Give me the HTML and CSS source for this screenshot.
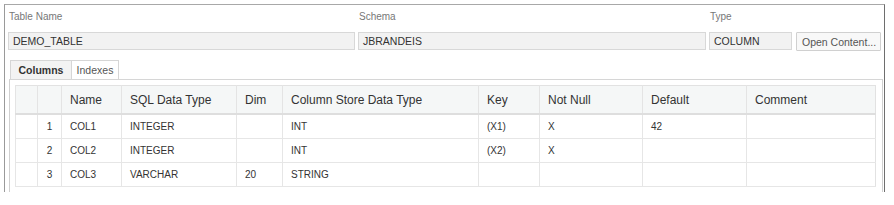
FILE: index.html
```html
<!DOCTYPE html>
<html>
<head>
<meta charset="utf-8">
<link rel="stylesheet" href="styles.css">
</head>
<body>
<div class="frame">
  <div class="fields">
    <div class="field">
      <div class="label">Table Name</div>
      <div class="input">DEMO_TABLE</div>
    </div>
    <div class="field">
      <div class="label">Schema</div>
      <div class="input">JBRANDEIS</div>
    </div>
    <div class="field">
      <div class="label">Type</div>
      <div class="input">COLUMN</div>
    </div>
    <div class="field">
      <div class="label">&nbsp;</div>
      <button class="btn">Open Content...</button>
    </div>
  </div>
  <div class="tabs">
    <div class="tab active">Columns</div>
    <div class="tab">Indexes</div>
  </div>
  <div class="panel">
    <table class="grid">
      <colgroup>
        <col style="width:22px"><col style="width:24px"><col style="width:60px"><col style="width:115px"><col style="width:46px"><col style="width:196px"><col style="width:61px"><col style="width:103px"><col style="width:104px"><col style="width:129px">
      </colgroup>
      <thead>
        <tr><th></th><th></th><th>Name</th><th>SQL Data Type</th><th>Dim</th><th>Column Store Data Type</th><th>Key</th><th>Not Null</th><th>Default</th><th>Comment</th></tr>
      </thead>
      <tbody>
        <tr><td></td><td class="num">1</td><td>COL1</td><td>INTEGER</td><td></td><td>INT</td><td>(X1)</td><td>X</td><td>42</td><td></td></tr>
        <tr><td></td><td class="num">2</td><td>COL2</td><td>INTEGER</td><td></td><td>INT</td><td>(X2)</td><td>X</td><td></td><td></td></tr>
        <tr><td></td><td class="num">3</td><td>COL3</td><td>VARCHAR</td><td>20</td><td>STRING</td><td></td><td></td><td></td><td></td></tr>
      </tbody>
    </table>
  </div>
</div>
</body>
</html>
```

FILE: styles.css
```css
html, body {
  margin: 0;
  padding: 0;
  background: #ffffff;
  font-family: "Liberation Sans", Arial, sans-serif;
  color: #333333;
}

.frame {
  margin: 4px 0 0 4px;
  width: 879px;
  height: 187px;
  border-top: 1px solid #a8a8a8;
  border-left: 1px solid #9a9a9a;
  border-right: 1px solid #6e6e6e;
  display: flex;
  flex-direction: column;
}

.fields {
  display: grid;
  grid-template-columns: 347px 348px 83px 86px;
  column-gap: 3px;
  padding: 5px 0 0 3px;
}

.field {
  display: flex;
  flex-direction: column;
}

.label {
  font-size: 10px;
  line-height: 14px;
  height: 14px;
  color: #777777;
  padding-left: 1px;
  margin-bottom: 8px;
}

.input {
  height: 16px;
  line-height: 16px;
  border: 1px solid #d8d8d8;
  background: #f2f2f2;
  font-size: 10.5px;
  color: #333333;
  padding-left: 4px;
}

.btn {
  margin: 0 0 0 1px;
  height: 19px;
  padding: 0 0 0 5px;
  text-align: left;
  border: 1px solid #d0d0d0;
  background: #f8f8f8;
  font-family: "Liberation Sans", Arial, sans-serif;
  font-size: 10.5px;
  color: #555555;
  border-radius: 1px;
}

.tabs {
  display: flex;
  margin: 9px 0 0 5px;
  height: 19px;
}

.tab {
  height: 18px;
  line-height: 18px;
  border: 1px solid #d6d6d6;
  border-bottom: none;
  font-size: 10.5px;
  color: #555555;
  text-align: center;
  background: #ffffff;
}

.tab.active {
  width: 60px;
  font-weight: bold;
  color: #333333;
  background: #f3f3f3;
}

.tab + .tab {
  width: 46px;
  border-left: none;
}

.panel {
  flex: 1;
  margin: 0 1px 0 4px;
  border-top: 1px solid #d6d6d6;
  border-left: 1px solid #d0d0d0;
  border-right: 1px solid #d0d0d0;
  padding: 5px 6px 0 5px;
}

.grid {
  width: 860px;
  border-collapse: collapse;
  table-layout: fixed;
  border: 1px solid #e2e2e2;
}

.grid th {
  height: 27px;
  background: #f5f7f7;
  border-left: 1px solid #e4e4e4;
  border-bottom: 2px solid #dedede;
  font-size: 12px;
  font-weight: normal;
  color: #333333;
  text-align: left;
  padding: 0 0 0 8px;
  white-space: nowrap;
}

.grid td {
  height: 23px;
  border-left: 1px solid #e6e6e6;
  border-bottom: 1px solid #e6e6e6;
  font-size: 10px;
  color: #333333;
  padding: 0 0 0 8px;
  white-space: nowrap;
}

.grid td.num {
  text-align: center;
  padding: 0;
}
```
